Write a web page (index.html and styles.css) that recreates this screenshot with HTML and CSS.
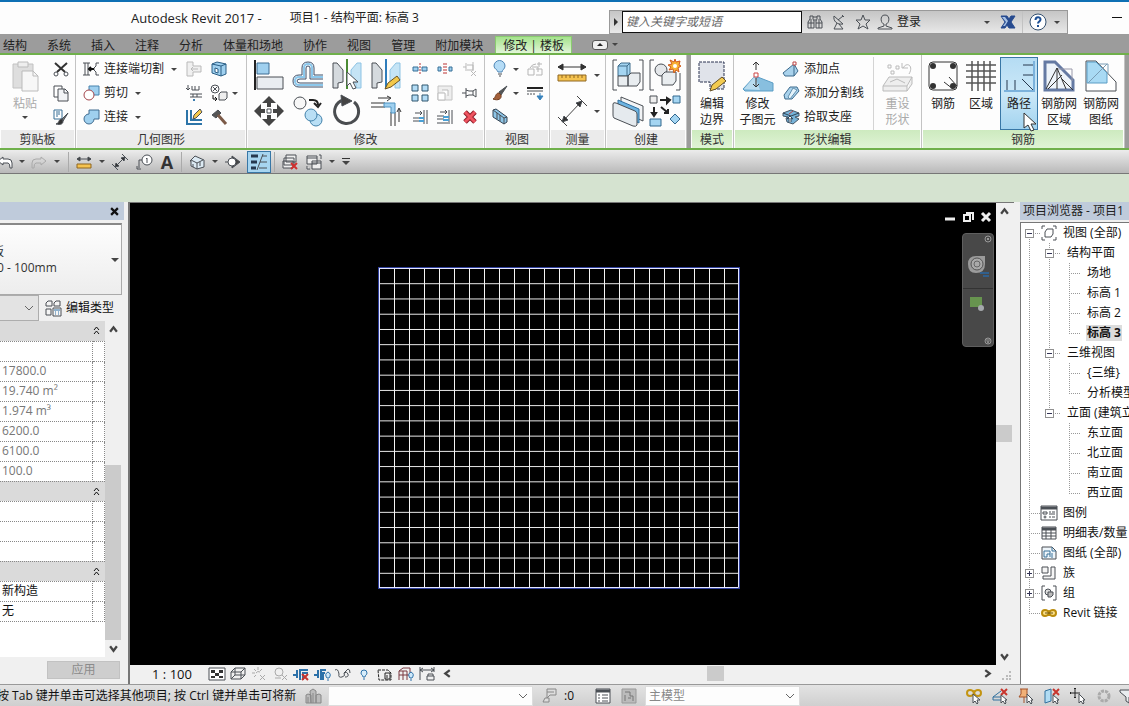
FILE: index.html
```
<!DOCTYPE html>
<html lang="zh-CN">
<head>
  <meta charset="UTF-8">
  <meta name="viewport" content="width=device-width, initial-scale=1.0">
  <title>Autodesk Revit 2017 - 项目1</title>
  <link rel="stylesheet" href="styles.css">
</head>
<body>
  <header class="title-bar">
    <div class="title-text"><span>Autodesk Revit 2017 -</span><span class="doc-name">项目1 - 结构平面: 标高 3</span></div>
    <div class="info-center">
      <button class="info-toggle" aria-label="展开"><i class="caret right"></i></button>
      <input class="search" type="text" aria-label="搜索" placeholder="键入关键字或短语">
      <button class="info-btn" aria-label="查找"><svg class="ic" viewBox="0 0 16 16"><path d="M3 2h3v3l1 2v7H1V8l2-3zM10 2h3v3l2 3v6H9V7l1-2zM1 9h6M9 9h6M7 6h2M4 5v9M12 5v9M6 3h4"/></svg></button>
      <button class="info-btn" aria-label="通讯中心"><svg class="ic" viewBox="0 0 16 16"><path d="M3 2c-1 5 3 9 9 8zM7 6l5-4M11 1l2 2M6 9l-3 6h9l-4-5"/></svg></button>
      <button class="info-btn" aria-label="收藏夹"><svg class="ic" viewBox="0 0 16 16"><path d="M8 1l2 5h5l-4 4 2 5-5-3-5 3 2-5-4-4h5z"/></svg></button>
      <button class="info-btn login"><svg class="ic" viewBox="0 0 16 16"><path d="M8 1c-6 0-4 9-1 9v2l-6 2v1h14v-1l-6-2v-2c3 0 5-9-1-9z"/></svg>登录</button>
      <button class="info-drop" aria-label="登录选项"><i class="caret"></i></button>
      <button class="info-btn exchange" aria-label="Exchange Apps"><svg class="ic" viewBox="0 0 16 16"><path d="M1 2h6l2 3 2-3h4l-4 6 4 6H9l-2-3-2 3H1l4-6z" fill="#274b8f" stroke="#274b8f"/><path d="M2 3h3l3 4-3 5H3l3-4z" fill="#a9c3e6" stroke="none"/></svg></button>
      <button class="info-btn help" aria-label="帮助"><svg class="ic" viewBox="0 0 16 16"><circle cx="8" cy="8" r="8" fill="#fff" stroke="#34506f"/><path d="M5.500 6c0-3.500 5-3.500 5-.5 0 2-2.500 2-2.500 4M8 11v2" stroke="#1d4f94" stroke-width="2"/></svg><i class="caret"></i></button>
    </div>
    <button class="win-min" aria-label="最小化"></button>
  </header>

  <nav class="tabs">
    <button>结构</button>
    <button>系统</button>
    <button>插入</button>
    <button>注释</button>
    <button>分析</button>
    <button>体量和场地</button>
    <button>协作</button>
    <button>视图</button>
    <button>管理</button>
    <button>附加模块</button>
    <button class="active">修改 | 楼板</button>
    <button class="tab-min" aria-label="最小化面板"><span><i class="caret up"></i></span><i class="caret"></i></button>
  </nav>

  <div class="ribbon">
    <section class="panel clipboard">
      <div class="panel-body">
        <button class="big off"><svg class="ic big-ic" viewBox="0 0 32 32"><path d="M4 4h20v24H4z" fill="#dedede" stroke="#c2c2c2"/><path d="M9 2h10v5H9z" fill="#eee" stroke="#bbb"/><path d="M13 11h11l5 5v15H13z" fill="#f7f7f7" stroke="#bbb"/><path d="M24 11v5h5" stroke="#bbb"/></svg>粘贴<i class="caret"></i></button>
        <div class="stack">
          <button aria-label="剪切"><svg class="ic" viewBox="0 0 16 16"><path d="M2 2l10 9M14 2L4 11" stroke="#333" stroke-width="2"/><circle cx="3" cy="13" r="2"/><circle cx="13" cy="13" r="2"/></svg></button>
          <button aria-label="复制"><svg class="ic" viewBox="0 0 16 16"><path d="M1 1h8v11H1z" fill="#fff"/><path d="M5 4h7l3 3v9H5z" fill="#f2f4f6"/><path d="M11 4v4h4"/></svg></button>
          <button aria-label="匹配类型"><svg class="ic" viewBox="0 0 16 16"><path d="M1 1h8v9H1zM3 3h4M3 5h4M3 7h2" fill="#fff" stroke="#376f96"/><path d="M15 4l-6 6 1 2z" fill="#777"/><path d="M9 10c-4 0-2 4-6 5 5 1 7 0 7-3z" fill="#333"/></svg></button>
        </div>
      </div>
      <h2>剪贴板</h2>
    </section>

    <section class="panel geometry">
      <div class="panel-body">
        <div class="stack">
          <button class="text-btn"><svg class="ic" viewBox="0 0 16 16"><path d="M0 2h7M0 14h7M2 2v12M5 2v12M16 2h-3v3l-2 2v2l2 2v3h3"/><path d="M11 8H6M8 6L6 8l2 2" stroke="#111" stroke-width="2"/></svg>连接端切割<i class="caret"></i></button>
          <button class="text-btn"><svg class="ic" viewBox="0 0 16 16"><path d="M6 1h10v9H6z" fill="#9fd0ef" stroke="#4682ad"/><circle cx="6" cy="10" r="5" fill="#fff" stroke="#a3454b"/></svg>剪切<i class="caret"></i></button>
          <button class="text-btn"><svg class="ic" viewBox="0 0 16 16"><path d="M6 1h10v9h-5a5 5 0 1 1-5-5z" fill="#9fd0ef" stroke="#3f6b8f"/></svg>连接<i class="caret"></i></button>
        </div>
        <div class="stack">
          <button aria-label="墙连接"><svg class="ic" viewBox="0 0 16 16"><path d="M1 1h6v4h8v6H7v4H1z" fill="#f0f0f0" stroke="#b9b9b9"/><path d="M12 8H5M7 6L5 8l2 2" stroke="#b9b9b9"/></svg></button>
          <button aria-label="拆分面"><svg class="ic" viewBox="0 0 16 16"><path d="M2 0v5M0 3l2 2 2-2M6 1v4h7V1M9 1v4M4 9h12M4 12h12M7 9v3M11 9v3"/><path d="M8 14v2" stroke="#3b7db0" stroke-width="2"/></svg></button>
          <button aria-label="填色"><svg class="ic" viewBox="0 0 16 16"><path d="M1 1v14h15M5 1v10h11" stroke="#2c74a8" stroke-width="2"/><path d="M7 10l1-4 6-6 2 3-6 6z" fill="#f4c84a"/></svg></button>
        </div>
        <div class="stack">
          <button aria-label="柱连接"><svg class="ic" viewBox="0 0 16 16"><path d="M1 3l9 2v10l-9-3zM1 3l5-2 9 2v10l-5 2M10 5l5-2" fill="#9fd0ef" stroke="#2a5e85"/><path d="M4 7l3 1v4l-3-1z" fill="#fff" stroke="#2a5e85"/></svg></button>
          <button aria-label="清除填色"><svg class="ic" viewBox="0 0 16 16"><circle cx="4" cy="4" r="4"/><path d="M2 2l4 4M6 2L2 6"/><path d="M2 10v4h4M4 12l2 2-2 2" stroke="#111"/><path d="M8 9l2-2h6v6l-2 2H8z" fill="#eee"/></svg><i class="caret"></i></button>
          <button aria-label="拆除"><svg class="ic" viewBox="0 0 16 16"><path d="M1 6l6-5 3 3-5 5z" fill="#555"/><path d="M7 6l8 9" stroke="#7b5a48" stroke-width="3"/></svg></button>
        </div>
      </div>
      <h2>几何图形</h2>
    </section>

    <section class="panel modify">
      <div class="panel-body">
        <div class="big-grid four">
          <button aria-label="对齐"><svg class="ic big-ic" viewBox="0 0 32 32"><path d="M2 1v30" stroke="#222" stroke-width="2"/><path d="M4 4h12v11H4z" fill="#9fd0ef" stroke="#3c6d92"/><path d="M4 18h26v12H4z" fill="#e9edf1"/></svg></button>
          <button aria-label="偏移"><svg class="ic big-ic" viewBox="0 0 32 32"><path d="M31 28H7q-6 0-6-6t6-6h3V9q0-6 6-6t6 6v7h9" stroke="#3a4c66"/><path d="M31 24H8q-3 0-3-2t3-2h6V9q0-2 2-2t2 2v11h13" stroke="#3a4c66"/><path d="M31 26H7q-4 0-4-4t4-4h5V9q0-4 4-4t4 4v9h11" stroke="#8cc8ec" stroke-width="2"/></svg></button>
          <button aria-label="镜像 - 拾取轴"><svg class="ic big-ic" viewBox="0 0 32 32"><path d="M2 4h4l6 7v12l-5 1v5H2z" fill="#d5dade"/><path d="M30 4h-4l-6 7v12l5 1v5h5z" fill="#c5e4f5" stroke="#8dc3e4"/><path d="M16 0v30" stroke="#4b8b34" stroke-width="2"/><path d="M16 13v14l3-3 3 6 3-1-3-6h5z" fill="#fff"/></svg></button>
          <button aria-label="镜像 - 绘制轴"><svg class="ic big-ic" viewBox="0 0 32 32"><path d="M2 4h4l6 7v12l-5 1v5H2z" fill="#d5dade"/><path d="M30 4h-4l-6 7v12l5 1v5h5z" fill="#c5e4f5" stroke="#8dc3e4"/><path d="M16 0v30" stroke="#2f7dbb" stroke-width="2"/><path d="M15 30l3-6 9-7 3 4-9 7z" fill="#f2c84b" stroke="#6a5423"/></svg></button>
          <button aria-label="移动"><svg class="ic big-ic" viewBox="0 0 32 32"><path d="M16 1l7 7h-5v4h-4V8H9zM16 31l7-7h-5v-4h-4v4H9zM1 16l7-7v5h4v4H8v5zM31 16l-7-7v5h-4v4h4v5z" fill="#444" stroke="none"/><path d="M14 14h4v4h-4z" fill="#fff"/></svg></button>
          <button aria-label="复制图元"><svg class="ic big-ic" viewBox="0 0 32 32"><circle cx="8" cy="8" r="6" fill="#f7f7f7"/><path d="M17 5h4q5 0 5 5M22 8l4 4 3-4" stroke="#222" stroke-width="2"/><circle cx="24" cy="25" r="6" fill="#b9dff5" stroke="#4382ab"/><circle cx="19" cy="20" r="6" fill="#b9dff5" stroke="#4382ab"/></svg></button>
          <button aria-label="旋转"><svg class="ic big-ic" viewBox="0 0 32 32"><path d="M23 7a12 12 0 1 1-11-2" stroke-width="3" stroke="#4a4d50"/><path d="M10 0l11 6-10 5z" fill="#444"/></svg></button>
          <button aria-label="修剪"><svg class="ic big-ic" viewBox="0 0 32 32"><path d="M1 8h14M1 12h14M21 17v14M25 17v14M8 3h12M17 1l4 2-4 3M29 27V14M27 17l2-4 2 4" stroke="#333"/><path d="M14 8h11v10h-4v-6h-7z" fill="#9fd0ef" stroke="#4e93c1"/></svg></button>
        </div>
        <div class="small-grid">
          <button aria-label="拆分图元"><svg class="ic" viewBox="0 0 16 16"><path d="M1 6h5v4H1zM10 6h5v4h-5z" fill="#9fd0ef" stroke="#376f96"/><path d="M8 2v12" stroke="#b33" stroke-dasharray="2 1"/></svg></button>
          <button aria-label="用间隙拆分"><svg class="ic" viewBox="0 0 16 16"><path d="M1 6h3v4H1zM12 6h3v4h-3z" fill="#9fd0ef" stroke="#376f96"/><path d="M7 2v12M9 2v12" stroke="#b33" stroke-dasharray="2 1"/></svg></button>
          <button aria-label="解锁"><svg class="ic" viewBox="0 0 16 16"><path d="M1 6h3M4 2v8M5 4h6v5H5M11 1v9M9 10l5 5M14 10l-5 5" stroke="#b9b9b9"/></svg></button>
          <button aria-label="阵列"><svg class="ic" viewBox="0 0 16 16"><path d="M0 0h6v6H0zM10 0h6v6h-6zM0 10h6v6H0zM10 10h6v6h-6z" fill="#b3dcf5" stroke="#31566f"/></svg></button>
          <button aria-label="缩放"><svg class="ic" viewBox="0 0 16 16"><path d="M1 1h14v14H1z" stroke="#c4c4c4" fill="#eee"/><path d="M1 8h7v7H1zM5 5h6v6" stroke="#bbb" fill="#fff"/></svg></button>
          <button aria-label="锁定"><svg class="ic" viewBox="0 0 16 16"><path d="M0 8h4M4 3v10M4 5l3 1h4l3-2v8l-3-2H7l-3 1M11 6v4"/></svg></button>
          <button aria-label="修剪单个"><svg class="ic" viewBox="0 0 16 16"><path d="M3 4h7M8 2l2 2-2 2M1 9h6M1 12h6M12 1v14M15 1v14"/><path d="M7 9h5M7 12h5" stroke="#4ba0d5" stroke-width="2"/></svg></button>
          <button aria-label="修剪多个"><svg class="ic" viewBox="0 0 16 16"><path d="M3 3h7M8 1l2 2-2 2M0 7h7M0 10h7M0 14h11M12 1v14M15 1v14"/><path d="M6 8h6M6 11h6" stroke="#4ba0d5" stroke-width="2"/></svg></button>
          <button aria-label="删除"><svg class="ic" viewBox="0 0 16 16"><path d="M3 3l10 10M13 3L3 13" stroke="#8d1f2a" stroke-width="5"/><path d="M3 3l10 10M13 3L3 13" stroke="#ef5460" stroke-width="3"/></svg></button>
        </div>
      </div>
      <h2>修改</h2>
    </section>

    <section class="panel view">
      <div class="panel-body">
        <div class="stack">
          <button aria-label="隐藏"><svg class="ic" viewBox="0 0 16 16"><path d="M6 11C6 9 2 8 2 5a5 5 0 0 1 11 0c0 3-3 4-3 6z" fill="#b5dcf6" stroke="#4f86b5"/><path d="M6 13h4M7 15h2"/></svg><i class="caret"></i></button>
          <button aria-label="替换"><svg class="ic" viewBox="0 0 16 16"><path d="M15 1L7 7l2 3z" fill="#555"/><path d="M7 8c-4 0-3 5-6 6 5 2 9 0 8-4z" fill="#a3603a" stroke="#703d20"/></svg><i class="caret"></i></button>
          <button aria-label="选择框"><svg class="ic" viewBox="0 0 16 16"><path d="M1 1l3-1 11 8v5l-3 2L1 8z" fill="#8ec6e8" stroke="#345"/><path d="M1 1l11 8v6M12 9l3-1M5 4v6M8 6v6"/></svg></button>
        </div>
        <div class="stack">
          <button aria-label="置换"><svg class="ic" viewBox="0 0 16 16"><path d="M1 8h6v6H1zM5 6h6v5M9 8h6v6H9M3 7q2-4 6-4M12 1v5M10 3h5" stroke="#b5b5b5"/></svg></button>
          <button aria-label="线处理"><svg class="ic" viewBox="0 0 16 16"><path d="M0 3h16" stroke="#222" stroke-width="2"/><path d="M0 6h16"/><path d="M0 9h9" stroke-dasharray="2 1"/><path d="M13 8v6M10 11l3 4 3-4z" fill="#3682bc" stroke="#3682bc"/></svg></button>
        </div>
      </div>
      <h2>视图</h2>
    </section>

    <section class="panel measure">
      <div class="panel-body">
        <div class="big-grid">
          <button aria-label="测量"><svg class="ic big-ic" viewBox="0 0 32 32"><path d="M2 8h28M7 5L2 8l5 3zM25 5l5 3-5 3z" fill="#333" stroke="#333"/><path d="M2 16h28v6H2z" fill="#f5c350" stroke="#8f6621"/><path d="M6 16v3M10 16v3M14 16v3M18 16v3M22 16v3M26 16v3" stroke="#8f6621"/></svg><i class="caret"></i></button>
          <button aria-label="对齐标注"><svg class="ic big-ic" viewBox="0 0 32 32"><path d="M7 26L25 7M2 22l9 9M21 1l10 10" stroke="#444"/><path d="M6 27l2-6 4 4zM26 6l-6 2 4 4z" fill="#333"/></svg><i class="caret"></i></button>
        </div>
      </div>
      <h2>测量</h2>
    </section>

    <section class="panel create">
      <div class="panel-body">
        <div class="big-grid two">
          <button aria-label="创建部件"><svg class="ic big-ic" viewBox="0 0 32 32"><path d="M5 1H1v30h4M27 1h4v30h-4"/><path d="M6 7l3-3h9v11l-3 2H6z" fill="#a4d5f2" stroke="#3e6c8b"/><path d="M6 7h9v10M15 7l3-3" stroke="#3e6c8b"/><path d="M6 17h10v10H6zM16 17l3-3h9v9l-3 4h-9z" fill="#e9edf0"/></svg></button>
          <button aria-label="创建组"><svg class="ic big-ic" viewBox="0 0 32 32"><path d="M5 1H1v30h4M27 31h4V14"/><circle cx="12" cy="11" r="6" fill="#e4e7ea"/><path d="M13 16l3-3h11v9l-3 4H13z" fill="#e9edf0"/><path d="M26 0l1 3 4-1-1 4 2 1-3 2 1 4-3-2-2 3-1-4-4 1 2-3-3-2 4-1-2-4 4 2z" fill="#f9b233" stroke="#cf5a1e"/><circle cx="26" cy="7" r="2" fill="#fff" stroke="none"/></svg></button>
          <button aria-label="创建零件"><svg class="ic big-ic" viewBox="0 0 32 32"><path d="M9 2l22 9v15L9 16z" fill="#f2f4f6"/><path d="M6 5l21 9v14L6 18z" fill="#6db4e2" stroke="#2f6f9e"/><path d="M1 9q0-2 3-1l19 8q2 1 2 3v11q-1 2-4 1L2 23q-1-1-1-3z" fill="#e5eaee"/></svg></button>
          <button aria-label="创建类似实例"><svg class="ic big-ic" viewBox="0 0 32 32"><path d="M1 1h7v7H1z" fill="#eee"/><path d="M24 1h7v7h-7zM1 24h11v7H1zM26 19l5 5-5 5-5-5z" fill="#a4d5f2" stroke="#33688e"/><path d="M11 5h9M18 3l3 2-3 3zM5 12v8M3 18l2 3 2-3zM12 12l6 5M19 14v4h-4" fill="#222" stroke="#222" stroke-width="2"/></svg></button>
        </div>
      </div>
      <h2>创建</h2>
    </section>

    <section class="panel context mode">
      <div class="panel-body">
        <button class="big"><svg class="ic big-ic" viewBox="0 0 32 32"><path d="M3 2h25v27H14v-7H3z" fill="#e0e3ea" stroke="#2b3350" stroke-dasharray="3 1"/><path d="M14 31l2-6 10-8 4 4-10 8z" fill="#f3cb50" stroke="#66512a"/></svg>编辑<br>边界</button>
      </div>
      <h2>模式</h2>
    </section>

    <section class="panel context shape">
      <div class="panel-body">
        <button class="big"><svg class="ic big-ic" viewBox="0 0 32 32"><path d="M1 29l12-13 18 7v8H3z" fill="#88bfdf" stroke="#5b9dc5"/><path d="M2 29l11-13 5 14z" fill="#b9dcef" stroke="none"/><path d="M14 10V2M11 5l3-3 3 3M14 18v9M11 24l3 3 3-3" stroke="#333"/><path d="M12 13h4v4h-4z" fill="#fff" stroke="#c44"/></svg>修改<br>子图元</button>
        <div class="stack">
          <button class="text-btn"><svg class="ic" viewBox="0 0 16 16"><path d="M0 12l11-9 4 7-4 5H2z" fill="#a9d2ec" stroke="#3d6a8c"/><path d="M11 3v12" stroke="#3d6a8c"/><path d="M10 1h3v3h-3z" stroke="#b44" fill="#fff"/></svg>添加点</button>
          <button class="text-btn"><svg class="ic" viewBox="0 0 16 16"><path d="M1 10l6-8h7l2 4-7 8H2z" fill="#a9d2ec" stroke="#3d6a8c"/><path d="M10 3l-5 9 2 2 7-9z" fill="#e5f3fb" stroke="#6290ae"/></svg>添加分割线</button>
          <button class="text-btn"><svg class="ic" viewBox="0 0 16 16"><path d="M0 4l8-3 8 3v3l-4 1 4 2-6 5-6-2-1-4 2-1-5-1z" fill="#76b2d8" stroke="#456"/><path d="M0 4l8 3 8-3" stroke="#345"/><path d="M6 13V9l-2 1 3-3 3 3-2-1v4" fill="#fff" stroke="#345"/><path d="M6 5l4-3" stroke="#b44"/></svg>拾取支座</button>
        </div>
        <button class="big off reset"><svg class="ic big-ic" viewBox="0 0 32 32"><path d="M1 26l6-9h23l-5 9v5H1zM1 26h24M25 31l5-7v-7M8 22l7-3 8 4" stroke="#bbb" fill="#eee"/><path d="M6 5h3v3H6zM14 6h3v3h-3zM9 11h3v3H9zM20 3v5h6M21 8c4-7 11-2 6 6" stroke="#bbb"/></svg>重设<br>形状</button>
      </div>
      <h2>形状编辑</h2>
    </section>

    <section class="panel context rebar">
      <div class="panel-body">
        <button class="big"><svg class="ic big-ic" viewBox="0 0 32 32"><path d="M6 2h20q4 0 4 4v20q0 4-4 4H6q-4 0-4-4V6q0-4 4-4zM17 22l9 7M22 17l8 9" stroke="#333"/><g fill="#333" stroke="none"><circle cx="6" cy="6" r="3"/><circle cx="26" cy="6" r="3"/><circle cx="6" cy="26" r="3"/><circle cx="26" cy="26" r="3"/></g></svg>钢筋</button>
        <button class="big"><svg class="ic big-ic" viewBox="0 0 32 32"><path d="M1 5h30M1 11h30M1 17h30M1 23h30M7 1v30M13 1v30M19 1v30M25 1v30" stroke="#555" stroke-width="1.500"/></svg>区域</button>
        <button class="big hot"><svg class="ic big-ic" viewBox="0 0 32 32"><path d="M31 1v30H1" stroke="#7cb2dc" stroke-width="2"/><path d="M4 20v10M12 20v10M20 5h10M20 15h10M19 19l11 11" stroke="#26384e"/></svg>路径<svg class="pointer" viewBox="0 0 14 20"><path d="M1 1v15l4-3 3 6 3-1-3-6h5z" fill="#fff" stroke="#333"/></svg></button>
        <button class="big"><svg class="ic big-ic" viewBox="0 0 32 32"><path d="M2 2h10l18 18v10H2z" fill="#eef4fa" stroke="#657aa3" stroke-width="3"/><path d="M15 9h14v12" stroke="#99a"/><path d="M3 29L14 8l9 21M14 8v21M5 29L19 15M18 18l12 12" stroke="#333"/></svg>钢筋网<br>区域</button>
        <button class="big"><svg class="ic big-ic" viewBox="0 0 32 32"><path d="M1 1h10l20 21v9H1z" fill="#fff"/><path d="M2 2h9l11 11v10H2z" fill="#a9daf4" stroke="#5b9dc5"/><path d="M3 23L22 4M14 4h9v9" stroke="#7a9db5"/></svg>钢筋网<br>图纸</button>
      </div>
      <h2>钢筋</h2>
    </section>
  </div>

  <div class="quick-bar">
    <button class="undo" aria-label="放弃"><svg class="ic" viewBox="0 0 16 16"><path d="M6 3L1 7l5 4V9h5q2 0 2 5h2V9q0-4-4-4H6z" fill="#fff"/></svg><i class="caret"></i></button>
    <button class="redo" aria-label="重做"><svg class="ic" viewBox="0 0 16 16"><path d="M10 3l5 4-5 4V9H5q-2 0-2 5H1V9q0-4 4-4h5z" stroke="#aaa"/></svg><i class="caret"></i></button>
    <span class="sep"></span>
    <button class="split" aria-label="测量"><svg class="ic" viewBox="0 0 16 16"><path d="M1 5h14M4 3L1 5l3 2zM12 3l3 2-3 2z" fill="#333"/><path d="M1 10h14v4H1z" fill="#f5c350" stroke="#8f6621"/></svg><i class="caret"></i></button>
    <button aria-label="对齐尺寸标注"><svg class="ic" viewBox="0 0 16 16"><path d="M3 13L13 3M0 10l6 6M10 0l6 6"/><path d="M3 13l1-4 3 3zM13 3L9 4l3 3z" fill="#333"/></svg></button>
    <button aria-label="按类别标记"><svg class="ic" viewBox="0 0 16 16"><circle cx="11" cy="6" r="5" fill="#fff"/><path d="M6 6H3v8M1 12v3h4M10 5l1-1v5"/></svg></button>
    <button class="letter" aria-label="文字">A</button>
    <span class="sep"></span>
    <button class="split" aria-label="默认三维视图"><svg class="ic" viewBox="0 0 16 16"><path d="M1 7l5-5 9 4v7l-7 2-6-3V7zM2 6l6 3v6M8 9l6-3M4 10v3M11 8v4" fill="#dceaf3"/></svg><i class="caret"></i></button>
    <button aria-label="剖面"><svg class="ic" viewBox="0 0 16 16"><path d="M7 2l8 6-8 6z" fill="#444"/><circle cx="7" cy="8" r="4" fill="#fff"/><path d="M0 8h3"/></svg></button>
    <button class="on" aria-label="细线"><svg class="ic" viewBox="0 0 16 16"><path d="M0 2h7M0 8h6M0 14h5" stroke="#26384e" stroke-width="3"/><path d="M11 2h5M9 8h7M8 14h8M12 0L6 16"/></svg></button>
    <span class="sep"></span>
    <button aria-label="关闭隐藏窗口"><svg class="ic" viewBox="0 0 16 16"><path d="M4 1h10v7H4zM2 4h10v7H2zM1 7h10v7H1z" fill="#eee"/><path d="M9 9l6 6M15 9l-6 6" stroke="#cf2f2f" stroke-width="2"/></svg></button>
    <button class="split" aria-label="切换窗口"><svg class="ic" viewBox="0 0 16 16"><path d="M1 2h10v8H1zM1 4h10M6 7h9v8H6zM6 9h9M13 1h2v4M1 12v3h3" fill="#eee"/></svg><i class="caret"></i></button>
    <button class="custom" aria-label="自定义"><span></span><i class="caret wide"></i></button>
  </div>
  <div class="options-bar"></div>

  <main class="workspace">
    <aside class="properties">
      <div class="dock-title"><button class="dock-close" aria-label="关闭"><svg class="chev" viewBox="0 0 8 8"><path d="M1 1l6 6M7 1L1 7"/></svg></button></div>
      <button class="type-selector"><span class="type-name"><span class="family">板</span><span class="type">0 - 100mm</span></span><i class="caret wide"></i></button>
      <div class="type-row">
        <select aria-label="图元过滤"><option></option></select>
        <button class="edit-type"><svg class="ic" viewBox="0 0 16 16"><path d="M1 3l2-2h4v5H1zM9 3l2-2h4v5H9zM1 9h5v6H1zM8 8h8v8H8z" fill="#f5f5f5"/><path d="M9 10h6M10 12h1M13 12h1M10 14h1M13 14h1" stroke="#2b6fa5"/></svg>编辑类型</button>
      </div>
      <div class="prop-area">
        <div class="prop-list">
          <table>
            <tr class="group"><td></td><td><button aria-label="折叠"><svg class="fold" viewBox="0 0 7 9"><path d="M1 4l2.500-3L6 4M1 8l2.500-3L6 8"/></svg></button></td></tr>
            <tr><td></td><td></td></tr>
            <tr><td>17800.0</td><td></td></tr>
            <tr><td>19.740 m²</td><td></td></tr>
            <tr><td>1.974 m³</td><td></td></tr>
            <tr><td>6200.0</td><td></td></tr>
            <tr><td>6100.0</td><td></td></tr>
            <tr><td>100.0</td><td></td></tr>
            <tr class="group"><td></td><td><button aria-label="折叠"><svg class="fold" viewBox="0 0 7 9"><path d="M1 4l2.500-3L6 4M1 8l2.500-3L6 8"/></svg></button></td></tr>
            <tr><td></td><td></td></tr>
            <tr><td></td><td></td></tr>
            <tr><td></td><td></td></tr>
            <tr class="group"><td></td><td><button aria-label="折叠"><svg class="fold" viewBox="0 0 7 9"><path d="M1 4l2.500-3L6 4M1 8l2.500-3L6 8"/></svg></button></td></tr>
            <tr class="editable"><td>新构造</td><td></td></tr>
            <tr class="editable"><td>无</td><td></td></tr>
          </table>
        </div>
        <div class="vscroll props-scroll">
          <button aria-label="向上"><svg class="chev" viewBox="0 0 8 8"><path d="M1 6l3-4 3 4"/></svg></button>
          <span class="track"><span class="thumb"></span></span>
          <button aria-label="向下"><svg class="chev" viewBox="0 0 8 8"><path d="M1 2l3 4 3-4"/></svg></button>
        </div>
      </div>
      <div class="apply-row"><button disabled>应用</button></div>
    </aside>

    <section class="view-window">
      <div class="view-main">
        <div class="canvas">
          <svg class="mesh" viewBox="0 0 362 322" role="img" aria-label="钢筋网楼板">
            <defs>
              <pattern id="cells" x="1" y="1" width="15" height="15.240" patternUnits="userSpaceOnUse">
                <path d="M0 .5h15M.5 0v16" stroke="#f4f4f4" fill="none"/>
              </pattern>
            </defs>
            <rect x="1" y="1" width="360" height="320" fill="url(#cells)"/>
            <rect x=".5" y=".5" width="361" height="321" fill="none" stroke="#2f3f9c"/>
            <path d="M1.500 1.500h359v319h-359z" fill="none" stroke="#e4e7ff"/>
          </svg>
          <div class="view-controls">
            <button aria-label="最小化"><svg viewBox="0 0 12 12"><path d="M1 8h10" stroke-width="3"/></svg></button>
            <button aria-label="还原"><svg viewBox="0 0 12 12"><path d="M4 2h7v7M2 4h6v6H2z" stroke-width="2"/></svg></button>
            <button aria-label="关闭"><svg viewBox="0 0 12 12"><path d="M2 2l8 8M10 2l-8 8" stroke-width="3"/></svg></button>
          </div>
          <div class="nav-bar">
            <button class="nav-close" aria-label="关闭导航栏"><svg class="tiny" viewBox="0 0 8 8"><circle cx="4" cy="4" r="3"/><path d="M3 3l2 2M5 3L3 5"/></svg></button>
            <button class="nav-wheel" aria-label="控制盘"><svg viewBox="0 0 24 24"><path d="M2 10q0-8 8-8h9v8q0 9-9 9-8 0-8-9z" fill="#9b9b9b"/><circle cx="11" cy="10" r="6" fill="#aaa" stroke="#555"/><circle cx="11" cy="10" r="3" fill="none" stroke="#666"/><path d="M14 19h9M17 22h6" stroke="#315f8c" stroke-width="2"/></svg></button>
            <button class="nav-zoom" aria-label="缩放"><svg viewBox="0 0 24 24"><path d="M4 4h12v10H4z" fill="#67944f"/><circle cx="15" cy="15" r="3" fill="#a5a9ac"/></svg></button>
            <button class="nav-close" aria-label="自定义导航栏"><svg class="tiny" viewBox="0 0 8 8"><circle cx="4" cy="4" r="3"/><path d="M2 3h4M3 4l1 2 1-2"/></svg></button>
          </div>
        </div>
        <div class="vscroll view-scroll">
          <button aria-label="向上"><svg class="chev" viewBox="0 0 8 8"><path d="M1 6l3-4 3 4"/></svg></button>
          <span class="track"><span class="thumb"></span></span>
          <button aria-label="向下"><svg class="chev" viewBox="0 0 8 8"><path d="M1 2l3 4 3-4"/></svg></button>
        </div>
      </div>
      <div class="view-bar">
        <button class="scale">1 : 100</button>
        <button aria-label="详细程度"><svg class="ic" viewBox="0 0 16 16"><path d="M0 2h16v12H0z" fill="#fff"/><path d="M2 4h4v3H2zM10 4h4v3h-4zM6 7h4v3H6zM2 10h4v2H2zM10 10h4v2h-4z" fill="#333" stroke="none"/></svg></button>
        <button aria-label="视觉样式"><svg class="ic" viewBox="0 0 16 16"><path d="M1 6l4-4h10v7l-4 4H1zM1 6h10v7M11 6l4-4M5 2v7h10M5 9l-4 4"/></svg></button>
        <button aria-label="日光路径"><svg class="ic" viewBox="0 0 16 16"><path d="M7 1v3M1 7h3M3 3l2 2M11 3L9 5M3 11l2-2M5 7a3 3 0 0 1 4-1M9 9l5 5M14 9l-5 5" stroke="#aaa"/></svg></button>
        <button aria-label="阴影"><svg class="ic" viewBox="0 0 16 16"><circle cx="7" cy="6" r="4" stroke="#aaa"/><path d="M3 12h6M10 9l5 5M15 9l-5 5" stroke="#aaa"/></svg></button>
        <button aria-label="裁剪视图"><svg class="ic" viewBox="0 0 16 16"><path d="M0 9h3M4 4v8M7 14V4h8M10 14V7h5" stroke="#2c71a9" stroke-width="2"/><path d="M9 8l6 6M15 8l-6 6" stroke="#c7332d" stroke-width="2"/></svg></button>
        <button aria-label="显示裁剪区域"><svg class="ic" viewBox="0 0 16 16"><path d="M0 9h3M4 4v8M7 14V4h5M9 14V7h2" stroke="#2c71a9" stroke-width="2"/><path d="M13 12q-3-4 1-6 4 2 1 6zM13 14h2" fill="#cfe9fa" stroke="#2c71a9"/></svg></button>
        <button aria-label="临时隐藏"><svg class="ic" viewBox="0 0 16 16"><path d="M0 4q3-2 4 4M4 8q-1 4 3 3t2-4q3-2 4 1t-3 3M9 7l4-4q2 0 2 4"/></svg></button>
        <button aria-label="显示隐藏图元"><svg class="ic" viewBox="0 0 16 16"><path d="M7 11c0-2-2-2-2-4a3 3 0 0 1 6 0c0 2-2 2-2 4zM7 13h2" fill="#d7edfb" stroke="#2c71a9"/></svg></button>
        <button aria-label="临时视图属性"><svg class="ic" viewBox="0 0 16 16"><path d="M1 4h10l3 3v7H2z" stroke="#222" stroke-dasharray="3 1"/><path d="M8 7h5v6H8zM10 9v3" stroke="#222"/></svg></button>
        <button aria-label="分析模型"><svg class="ic" viewBox="0 0 16 16"><path d="M1 14V5l4-3h7v10M1 5h8v9M5 5v9M1 9h10" stroke="#7b3840"/><path d="M12 12q-3-4 1-6 4 2 1 6zM12 14h2" fill="#cfe9fa" stroke="#2c71a9"/></svg></button>
        <button aria-label="显示约束"><svg class="ic" viewBox="0 0 16 16"><path d="M1 1v13M15 1v5M1 4h14M4 2L1 4l3 2M12 2l3 2-3 2M8 10h7v4H8zM9 10V8h5v2"/></svg></button>
        <button aria-label="向左"><svg class="chev" viewBox="0 0 8 8"><path d="M6 1L2 4l4 3"/></svg></button>
        <span class="htrack"><span class="thumb"></span></span>
        <button class="scroll-right" aria-label="向右"><svg class="chev" viewBox="0 0 8 8"><path d="M2 1l4 3-4 3"/></svg></button>
        <svg class="grip" viewBox="0 0 9 9"><path d="M7 0h2v2H7zM4 4h2v2H4zM7 4h2v2H7zM0 7h2v2H0zM4 7h2v2H4zM7 7h2v2H7z"/></svg>
      </div>
    </section>

    <aside class="browser">
      <div class="dock-title">项目浏览器 - 项目1</div>
      <ul class="tree">
        <li><span class="guide first"><button class="box" aria-label="折叠"></button></span><svg class="ic" viewBox="0 0 16 16"><path d="M4 1H1v3M12 1h3v3M1 12v3h3M15 12v3h-3M4 7l2-3h6v5l-2 3H4z"/></svg><a href="#">视图 (全部)</a></li>
        <li><span class="guide"></span><span class="guide mid"><button class="box" aria-label="折叠"></button></span><a href="#">结构平面</a></li>
        <li><span class="guide"></span><span class="guide"></span><span class="guide mid"></span><a href="#">场地</a></li>
        <li><span class="guide"></span><span class="guide"></span><span class="guide mid"></span><a href="#">标高 1</a></li>
        <li><span class="guide"></span><span class="guide"></span><span class="guide mid"></span><a href="#">标高 2</a></li>
        <li><span class="guide"></span><span class="guide"></span><span class="guide last"></span><a href="#" class="current">标高 3</a></li>
        <li><span class="guide"></span><span class="guide mid"><button class="box" aria-label="折叠"></button></span><a href="#">三维视图</a></li>
        <li><span class="guide"></span><span class="guide"></span><span class="guide mid"></span><a href="#">{三维}</a></li>
        <li><span class="guide"></span><span class="guide"></span><span class="guide last"></span><a href="#">分析模型</a></li>
        <li><span class="guide"></span><span class="guide last"><button class="box" aria-label="折叠"></button></span><a href="#">立面 (建筑立面)</a></li>
        <li><span class="guide"></span><span class="guide none"></span><span class="guide mid"></span><a href="#">东立面</a></li>
        <li><span class="guide"></span><span class="guide none"></span><span class="guide mid"></span><a href="#">北立面</a></li>
        <li><span class="guide"></span><span class="guide none"></span><span class="guide mid"></span><a href="#">南立面</a></li>
        <li><span class="guide"></span><span class="guide none"></span><span class="guide last"></span><a href="#">西立面</a></li>
        <li><span class="guide mid"></span><svg class="ic" viewBox="0 0 16 16"><path d="M0 1h16v14H0z" fill="#fff"/><path d="M0 3h16" stroke-width="3"/><path d="M2 7h4v2H2zM8 7h2M11 7h3M8 9h6M8 12h2M11 12h3"/><circle cx="4" cy="12" r="1"/></svg><a href="#">图例</a></li>
        <li><span class="guide mid"></span><svg class="ic" viewBox="0 0 16 16"><path d="M1 2h14v12H1zM1 8h14M1 11h14M5 5v9M10 5v9" fill="#fff"/><path d="M1 4h14" stroke-width="3"/></svg><a href="#">明细表/数量</a></li>
        <li><span class="guide mid"></span><svg class="ic" viewBox="0 0 16 16"><path d="M1 2h10l4 4v8H1z" fill="#eef5fa"/><path d="M3 6h6v6M3 6v6h3V9h3M11 2v4h4M11 8v5" stroke="#3b7299"/></svg><a href="#">图纸 (全部)</a></li>
        <li><span class="guide mid"><button class="box plus" aria-label="展开"></button></span><svg class="ic" viewBox="0 0 16 16"><path d="M1 2h6v6H1zM10 2h4v12H2v-3h8z" fill="#f5f5f5"/></svg><a href="#">族</a></li>
        <li><span class="guide mid"><button class="box plus" aria-label="展开"></button></span><svg class="ic" viewBox="0 0 16 16"><path d="M4 1H1v14h3M12 1h3v14h-3"/><circle cx="7" cy="7" r="3" fill="#ddd"/><path d="M7 7h5v3l-2 2H7z" fill="#bbb"/></svg><a href="#">组</a></li>
        <li><span class="guide last"></span><svg class="ic" viewBox="0 0 16 16"><path d="M1 8q0-3 3-3t4 3q1-3 4-3t3 3-3 3-4-3q-1 3-4 3T1 8z" fill="#fbe08a" stroke="#bb8d0d" stroke-width="2"/><path d="M4 8h8" stroke="#6b5312"/></svg><a href="#">Revit 链接</a></li>
      </ul>
    </aside>
  </main>

  <footer class="status-bar">
    <span class="hint">按 Tab 键并单击可选择其他项目; 按 Ctrl 键并单击可将新</span>
    <svg class="ic" viewBox="0 0 16 16"><path d="M1 7l2-1 3 1v8H1zM5 3l3-2 3 2v12H6zM11 7l3-1 2 1v8h-5zM3 9v6M8 5v10" stroke="#888" fill="#bbb"/></svg>
    <select class="workset" aria-label="工作集"><option></option></select>
    <button class="requests"><svg class="ic" viewBox="0 0 16 16"><path d="M5 1h9v6H8l-3 3zM3 10h4v4H1zM5 4h7" stroke="#888" fill="#ddd"/></svg>:0</button>
    <button aria-label="设计选项"><svg class="ic" viewBox="0 0 16 16"><path d="M1 1h14v14H1z" fill="#fff"/><path d="M1 3h14" stroke-width="3"/><path d="M3 7h2M7 7h6M3 10h2M7 10h6M3 13h2M7 13h6"/></svg></button>
    <button aria-label="添加到集"><svg class="ic" viewBox="0 0 16 16"><path d="M1 1h14v14H1z" fill="#bbb" stroke="#999"/><path d="M4 4h5v4h3v5M4 7v6M7 10h3" stroke="#777"/></svg></button>
    <select class="design" aria-label="主模型"><option>主模型</option></select>
    <div class="select-tools">
      <button aria-label="选择链接"><svg class="ic" viewBox="0 0 16 16"><path d="M1 5q0-3 3-3t4 3q1-3 4-3t3 3-3 3-4-3q-1 3-4 3T1 5z" stroke="#c39412" stroke-width="2"/><path d="M7 6v9l2-2 2 3 1-1-1-3h3z" fill="#fff"/></svg></button>
      <button aria-label="选择基线图元"><svg class="ic" viewBox="0 0 16 16"><path d="M9 3L1 9h8M1 12h8M1 9v3" stroke="#31719f"/><path d="M9 1l6 6M15 1L9 7" stroke="#c8352d" stroke-width="2"/><path d="M9 7v8l2-2 2 3 1-1-1-3h2z" fill="#fff"/></svg></button>
      <button aria-label="选择锁定图元"><svg class="ic" viewBox="0 0 16 16"><path d="M2 1h8M3 1v5l-2 3h10L9 6V1M6 9v6" stroke="#a4532a" fill="#f1b178"/><path d="M9 6v9l2-2 2 3 1-1-1-3h2z" fill="#fff"/></svg></button>
      <button aria-label="按面选择"><svg class="ic" viewBox="0 0 16 16"><path d="M1 3l6-2v12l-6 2z" fill="#b1dcf3" stroke="#31719f"/><path d="M9 1l6 6M15 1L9 7" stroke="#c8352d" stroke-width="2"/><path d="M9 7v8l2-2 2 3 1-1-1-3h2z" fill="#fff"/></svg></button>
      <button aria-label="选择时拖曳"><svg class="ic" viewBox="0 0 16 16"><path d="M5 0v10M0 5h10M4 1l1-1 1 1M1 4L0 5l1 1M4 9l1 1 1-1" stroke="#222"/><path d="M9 6v9l2-2 2 3 1-1-1-3h2z" fill="#fff"/></svg></button>
      <button aria-label="后台进程"><svg class="ic" viewBox="0 0 16 16"><circle cx="8" cy="8" r="5" stroke="#aaa" stroke-width="3" stroke-dasharray="3 1"/></svg></button>
      <button aria-label="过滤器"><svg class="ic" viewBox="0 0 16 16"><path d="M1 2h14v2l-5 5v6l-3-2V9L1 4z" fill="#e9edf0"/></svg></button>
    </div>
  </footer>
</body>
</html>
```

FILE: styles.css
```
* {
  box-sizing: border-box;
}

body {
  margin: 0;
  height: 100vh;
  display: flex;
  flex-direction: column;
  overflow: hidden;
  background: #f0f0f0;
  color: #222;
  font: 12px/16px "Open Sans", "Noto Sans CJK SC", sans-serif;
}

button {
  display: flex;
  flex: none;
  align-items: center;
  justify-content: center;
  padding: 0;
  border: 0;
  background: none;
  color: inherit;
  font: inherit;
  white-space: nowrap;
  cursor: pointer;
}

select,
input {
  font: inherit;
  border-radius: 0;
}

a {
  color: inherit;
  text-decoration: none;
}

.ic {
  flex: none;
  width: 16px;
  height: 16px;
  fill: none;
  stroke: #4a4f55;
  overflow: visible;
}

.ic.big-ic {
  width: 32px;
  height: 32px;
}

.caret {
  flex: none;
  border: 3px solid transparent;
  border-top-color: #444;
  border-bottom: 0;
}

.caret.wide {
  border-width: 4px 4px 0;
}

.caret.up {
  border: 3px solid transparent;
  border-bottom-color: #222;
  border-top: 0;
}

.caret.right {
  border: 4px solid transparent;
  border-left-color: #333;
  border-right: 0;
}

/* title bar */
.title-bar {
  flex: none;
  display: flex;
  height: 34px;
  border-top: 2px solid #0e70b4;
  background: #fdfdfd;
}

.title-text {
  display: flex;
  flex: 1;
  gap: 28px;
  padding: 8px 0 0 131px;
  font-size: 13px;
  white-space: nowrap;
}

.doc-name {
  font-size: 12px;
}

.info-center {
  flex: none;
  display: flex;
  align-items: stretch;
  width: 459px;
  height: 24px;
  margin-top: 8px;
  border: 1px solid #999;
  background: linear-gradient(#c5c5c5, #e8e8e8);
}

.info-toggle {
  width: 12px;
}

.search {
  width: 180px;
  margin-right: 1px;
  padding: 0 3px;
  border: 1px solid #111;
  background: #fff;
}

.search::placeholder {
  color: #666;
  font-style: italic;
}

.info-btn {
  width: 24px;
}

.info-btn.login {
  width: 48px;
  gap: 4px;
}

.info-drop {
  margin-left: auto;
  width: 12px;
}

.info-btn.exchange {
  width: 30px;
  border-right: 1px solid #c2c2c2;
}

.info-btn.help {
  width: 44px;
  gap: 8px;
}

.win-min {
  width: 61px;
  align-items: flex-start;
}

.win-min::before {
  content: "";
  width: 10px;
  height: 1px;
  margin: 15px 0 0 37px;
  background: #111;
}

/* ribbon tabs */
.tabs {
  flex: none;
  display: flex;
  height: 21px;
  padding-top: 2px;
  border-bottom: 2px solid #6fb04b;
  background: #9c9c9c;
}

.tabs button {
  padding: 2px 10px 0;
}

.tabs button:first-child {
  margin-left: -7px;
}

.tabs .active {
  margin-left: 2px;
  padding: 1px 7px 0;
  border: 1px solid #8acb70;
  border-bottom: 0;
  background: linear-gradient(#a5e38c, #e2f5d8);
}

.tabs .tab-min {
  gap: 4px;
  padding: 0 20px;
}

.tab-min span {
  display: flex;
  padding: 2px 4px 3px;
  border: 1px solid #555;
  border-radius: 3px;
  background: #eee;
}

/* ribbon panels */
.ribbon {
  flex: none;
  display: flex;
  height: 95px;
  border-bottom: 2px solid #6fb04b;
  background: #9c9c9c;
}

.panel {
  flex: none;
  display: flex;
  flex-direction: column;
  border-right: 1px solid #c3c3c3;
  background: #fdfdfd;
}

.panel-body {
  flex: 1;
  display: flex;
  padding-top: 2px;
}

.panel h2 {
  margin: 0 1px;
  height: 18px;
  background: #ebebeb;
  color: #333;
  font-size: 12px;
  font-weight: 400;
  line-height: 20px;
  text-align: center;
}

.panel.context h2 {
  background: linear-gradient(#cdeabf, #dff3d5);
}

.big {
  flex-direction: column;
  justify-content: flex-start;
  padding-top: 3px;
  height: 73px;
}

.big .ic {
  margin-bottom: 4px;
}

.big .caret {
  margin-top: 4px;
}

.big.off {
  color: #aaa;
}

.stack {
  display: flex;
  flex-direction: column;
}

.stack button {
  height: 24px;
  gap: 5px;
  justify-content: flex-start;
}

.big-grid {
  display: grid;
  grid-auto-rows: 36px;
  grid-template-columns: 46px;
}

.big-grid.two {
  grid-template-columns: 37px 37px;
}

.big-grid.four {
  grid-template-columns: repeat(4, 39px);
}

.small-grid {
  display: grid;
  grid-template-columns: repeat(3, 25px);
  grid-auto-rows: 24px;
}

.clipboard {
  width: 76px;
}

.clipboard .big {
  width: 50px;
}

.clipboard .stack {
  padding-left: 3px;
}

.geometry {
  width: 171px;
}

.geometry .panel-body {
  gap: 9px;
  padding-left: 7px;
}

.geometry .text-btn .caret {
  margin-left: 2px;
}

.geometry .stack:first-child {
  width: 94px;
}

.modify {
  width: 238px;
}

.modify .panel-body {
  gap: 2px;
  padding-left: 2px;
}

.view {
  width: 65px;
}

.view .panel-body {
  gap: 8px;
  padding-left: 7px;
}

.measure {
  width: 56px;
}

.measure .panel-body {
  padding-left: 5px;
}

.measure .big-grid button {
  gap: 6px;
}

.create {
  width: 81px;
  margin-right: 4px;
}

.create .panel-body {
  padding-left: 3px;
}

.mode {
  width: 43px;
}

.mode .big {
  width: 42px;
}

.shape {
  width: 188px;
}

.shape .big {
  width: 47px;
}

.shape .stack {
  width: 94px;
  padding-left: 2px;
  border-right: 1px solid #d4d4d4;
}

.rebar {
  width: 203px;
}

.rebar .panel-body {
  padding-left: 2px;
}

.rebar .big {
  width: 38px;
}

.rebar .big:nth-child(n + 4) {
  width: 42px;
}

.big.hot {
  position: relative;
  padding-top: 2px;
  border: 1px solid #3877a6;
  background: linear-gradient(#b5dcf3, #cbe8f8 50%, #a2d3ef);
}

.pointer {
  position: absolute;
  right: 0;
  bottom: -3px;
  width: 14px;
  height: 20px;
}

/* quick access toolbar */
.quick-bar {
  flex: none;
  display: flex;
  align-items: center;
  height: 24px;
  border-bottom: 1px solid #777;
  background: linear-gradient(#ececec, #b9b9b9);
}

.quick-bar button {
  width: 24px;
  height: 22px;
}

.quick-bar .undo {
  justify-content: flex-end;
  gap: 6px;
  width: 25px;
}

.quick-bar .redo {
  width: 40px;
  gap: 7px;
}

.quick-bar .split {
  width: 36px;
  gap: 7px;
}

.sep {
  flex: none;
  width: 1px;
  height: 20px;
  margin: 0 3px;
  background: #aaa;
}

.quick-bar .letter {
  width: 22px;
  color: #333;
  font-size: 18px;
  font-weight: 700;
}

.quick-bar .on {
  margin-left: 2px;
  border: 1px solid #3877a6;
  background: #a7d5f0;
}

.quick-bar .custom {
  width: 16px;
  flex-direction: column;
  gap: 2px;
}

.custom span {
  width: 8px;
  height: 1px;
  background: #333;
}

.options-bar {
  flex: none;
  height: 28px;
  background: #d5e3d0;
}

/* workspace */
.workspace {
  flex: 1;
  min-height: 0;
  display: grid;
  grid-template-columns: 124px minmax(0, 1fr) 109px;
}

.dock-title {
  flex: none;
  height: 18px;
  display: flex;
  align-items: center;
  background: #bfcbdb;
  white-space: nowrap;
}

.properties {
  display: flex;
  flex-direction: column;
  min-height: 0;
  overflow: hidden;
}

.dock-close {
  width: 20px;
  margin-left: auto;
}

.dock-close .chev {
  stroke: #111;
}

.type-selector {
  justify-content: space-between;
  height: 72px;
  margin: 3px 2px 0 0;
  padding-right: 2px;
  border: 1px solid #aaa;
  border-top: 2px solid #888;
  border-left: 0;
  background: linear-gradient(#fdfdfd, #ededed);
  color: #333;
  text-align: left;
}

.type-name {
  display: flex;
  flex-direction: column;
}

.family {
  margin-left: -8px;
}

.type {
  margin-left: -3px;
}

.type-row {
  flex: none;
  display: flex;
  gap: 6px;
  height: 26px;
}

.type-row select {
  width: 39px;
  border: 1px solid #adadad;
  border-left: 0;
}

select {
  appearance: none;
  padding: 0 3px;
  color: #888;
  background: #e3e3e3 url("data:image/svg+xml,%3Csvg xmlns='http://www.w3.org/2000/svg' width='10' height='6'%3E%3Cpath d='M1 1l4 4 4-4' fill='none' stroke='%23666'/%3E%3C/svg%3E") no-repeat right 4px center;
}

.edit-type {
  gap: 5px;
  color: #111;
}

.prop-area {
  flex: 1;
  min-height: 0;
  display: flex;
  margin-right: 3px;
  background: #fff;
}

.prop-list {
  flex: 1;
}

.prop-list table {
  width: 105px;
  border-collapse: collapse;
}

.prop-list td {
  height: 20px;
  padding: 0 0 0 2px;
  border: 1px dotted #888;
  border-left: 0;
  line-height: 18px;
  color: #777;
}

.prop-list td:last-child {
  width: 12px;
  padding: 0;
}

.prop-list .editable td {
  color: #111;
}

.prop-list .group td {
  border: 0;
  background: #dadada;
}

.fold,
.chev {
  width: 7px;
  height: 9px;
  fill: none;
  stroke: #111;
}

.chev {
  width: 9px;
  height: 9px;
  stroke: #444;
  stroke-width: 2;
}

.vscroll {
  flex: none;
  display: flex;
  flex-direction: column;
  width: 16px;
  background: #f0f0f0;
}

.vscroll button {
  height: 17px;
}

.track {
  flex: 1;
  display: flex;
  flex-direction: column;
}

.thumb {
  background: #cbcbcb;
}

.props-scroll .track {
  justify-content: flex-end;
}

.props-scroll .thumb {
  height: 58%;
}

.view-scroll {
  width: 18px;
  padding-right: 2px;
}

.view-scroll .thumb {
  height: 17px;
  margin-top: 205px;
}

.apply-row {
  flex: none;
  padding: 4px 4px 5px;
}

.apply-row button {
  width: 73px;
  height: 18px;
  margin-left: auto;
  border: 1px solid #c2c2c2;
  background: #cecece;
  color: #8b8b8b;
}

/* view window */
.view-window {
  display: flex;
  flex-direction: column;
  min-height: 0;
  margin: 0 6px 0 4px;
  border-top: 1px solid #777;
  border-left: 2px solid #777;
}

.view-main {
  flex: 1;
  min-height: 0;
  display: flex;
}

.canvas {
  position: relative;
  flex: 1;
  display: flex;
  align-items: center;
  justify-content: center;
  padding: 0 8px 12px 0;
  background: #000;
}

.mesh {
  width: 362px;
  height: 322px;
}

.view-controls {
  position: absolute;
  top: 6px;
  right: 1px;
  display: flex;
}

.view-controls button {
  width: 18px;
  height: 16px;
}

.view-controls svg {
  width: 12px;
  height: 12px;
  fill: none;
  stroke: #eee;
}

.nav-bar {
  position: absolute;
  top: 30px;
  right: 2px;
  display: flex;
  flex-direction: column;
  width: 32px;
  height: 114px;
  border: 1px solid #5f5f5f;
  border-radius: 4px;
  background: #484848;
}

.nav-close {
  justify-content: flex-end;
  height: 10px;
  padding-right: 1px;
}

.tiny {
  width: 8px;
  height: 8px;
  fill: none;
  stroke: #999;
}

.nav-wheel {
  flex: 1;
  border-bottom: 1px solid #333;
}

.nav-zoom {
  flex: 1;
  align-items: flex-start;
  padding-top: 4px;
}

.nav-wheel svg,
.nav-zoom svg {
  width: 24px;
  height: 24px;
}

.view-bar {
  flex: none;
  display: flex;
  align-items: center;
  height: 19px;
  padding-bottom: 2px;
  background: #f0f0f0;
}

.view-bar button {
  width: 21px;
  height: 17px;
}

.view-bar .scale {
  width: 76px;
  padding-left: 8px;
  color: #111;
  font-size: 13px;
}

.htrack {
  flex: 1;
}

.htrack .thumb {
  display: block;
  width: 17px;
  height: 15px;
  margin-left: 48%;
}

.grip {
  width: 9px;
  height: 9px;
  margin: 4px 3px 0 4px;
  fill: #bbb;
}

/* project browser */
.browser {
  display: flex;
  flex-direction: column;
  min-height: 0;
  overflow: hidden;
}

.browser .dock-title {
  padding-left: 3px;
}

.tree {
  flex: 1;
  margin: 2px 0 0;
  padding: 0;
  border-top: 1px solid #777;
  border-left: 1px solid #777;
  background: #fff;
  list-style: none;
}

.tree li {
  display: flex;
  align-items: center;
  height: 20px;
  color: #111;
  white-space: nowrap;
}

.tree a {
  margin-left: 5px;
  padding: 0 1px;
}

.tree .current {
  background: #dcdcdc;
  font-weight: 700;
}

.guide {
  --dots-v: repeating-linear-gradient(#999 0 1px, transparent 1px 2px);
  --dots-h: repeating-linear-gradient(90deg, #999 0 1px, transparent 1px 2px);
  flex: none;
  display: flex;
  align-items: center;
  width: 20px;
  height: 20px;
  padding-left: 4px;
  background: var(--dots-v) 8px 0 / 1px 20px no-repeat;
}

.guide.mid {
  background: var(--dots-v) 8px 0 / 1px 20px no-repeat, var(--dots-h) 8px 10px / 11px 1px no-repeat;
}

.guide.last {
  background: var(--dots-v) 8px 0 / 1px 10px no-repeat, var(--dots-h) 8px 10px / 11px 1px no-repeat;
}

.guide.first {
  background: var(--dots-v) 8px 10px / 1px 10px no-repeat, var(--dots-h) 8px 10px / 11px 1px no-repeat;
}

.guide.none {
  background: none;
}

.box {
  width: 9px;
  height: 9px;
  border: 1px solid #919191;
  background: linear-gradient(#335, #335) center / 5px 1px no-repeat #fff;
}

.box.plus {
  background: linear-gradient(#335, #335) center / 5px 1px no-repeat, linear-gradient(#335, #335) center / 1px 5px no-repeat #fff;
}

/* status bar */
.status-bar {
  flex: none;
  display: flex;
  align-items: center;
  height: 22px;
  border-top: 1px solid #999;
  background: linear-gradient(#e3e3e3, #cfcfcf);
  color: #111;
}

.hint {
  flex: none;
  width: 305px;
  padding-right: 6px;
  margin-left: -3px;
  overflow: hidden;
  white-space: nowrap;
}

.status-bar > .ic {
  margin: 0 7px 0 3px;
}

.status-bar select {
  height: 20px;
  border: 1px solid #ddd;
  background-color: #fdfdfd;
}

.status-bar .workset {
  width: 205px;
}

.status-bar .requests {
  width: 50px;
  gap: 6px;
}

.status-bar > button {
  width: 26px;
}

.status-bar > .requests + button {
  margin-left: 7px;
}

.status-bar .design {
  width: 155px;
  margin-left: 3px;
}

.select-tools {
  display: flex;
  margin-left: auto;
  margin-right: -8px;
}

.select-tools button {
  width: 26px;
  height: 20px;
}

.select-tools button:last-child {
  width: 20px;
}
```
